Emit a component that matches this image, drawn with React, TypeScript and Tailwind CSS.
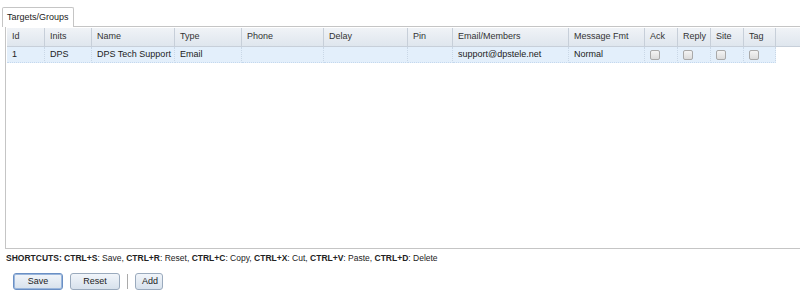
import React from 'react';

const columns = [
  { key: 'id', label: 'Id', width: 38 },
  { key: 'inits', label: 'Inits', width: 47 },
  { key: 'name', label: 'Name', width: 83 },
  { key: 'type', label: 'Type', width: 67 },
  { key: 'phone', label: 'Phone', width: 82 },
  { key: 'delay', label: 'Delay', width: 84 },
  { key: 'pin', label: 'Pin', width: 45 },
  { key: 'email', label: 'Email/Members', width: 116 },
  { key: 'fmt', label: 'Message Fmt', width: 76 },
  { key: 'ack', label: 'Ack', width: 33 },
  { key: 'reply', label: 'Reply', width: 33 },
  { key: 'site', label: 'Site', width: 33 },
  { key: 'tag', label: 'Tag', width: 32 },
];

const rows = [
  {
    id: '1',
    inits: 'DPS',
    name: 'DPS Tech Support',
    type: 'Email',
    phone: '',
    delay: '',
    pin: '',
    email: 'support@dpstele.net',
    fmt: 'Normal',
  },
];

const checkKeys = ['ack', 'reply', 'site', 'tag'];

const Checkbox = () => (
  <span className="inline-block h-[10px] w-[10px] rounded-[2px] border border-[#a9a9a9] bg-gradient-to-b from-[#f4f4f4] to-[#dcdcdc]" />
);

const Button = ({ label, focused }: { label: string; focused?: boolean }) => (
  <button
    type="button"
    className={`h-[17px] w-full rounded-[3px] border bg-gradient-to-b from-[#f1f5fa] to-[#d7e1ec] px-[6px] text-[9px] leading-none text-[#222] ${
      focused ? 'border-[#6a8fc4] shadow-[inset_0_0_0_1px_#9ab6dc]' : 'border-[#9aaabd]'
    }`}
  >
    {label}
  </button>
);

export default function App() {
  return (
    <div
      className="h-[291px] w-[800px] overflow-hidden bg-white text-[9px] text-[#222]"
      style={{ fontFamily: '"Liberation Sans", Arial, sans-serif' }}
    >
      {/* Tabs */}
      <div className="flex items-end pl-[2px] pt-[7px]">
        <div className="relative z-10 -mb-px flex h-[20px] items-center rounded-t-[2px] border border-b-0 border-[#c5c5c5] bg-white px-[4px] pt-[1px]">
          Targets/Groups
        </div>
      </div>

      {/* Panel */}
      <div className="ml-[5px] flex h-[223px] flex-col border-l border-t border-b border-[#c5c5c5] pl-px pt-px">
        <div className="flex">
          {columns.map((c) => (
            <div
              key={c.key}
              style={{ width: c.width }}
              className="flex h-[19px] shrink-0 items-center whitespace-nowrap border-r border-b border-[#c7cfd9] bg-gradient-to-b from-[#f0f3f7] to-[#dfe6ee] pl-[5px] text-[#333]"
            >
              {c.label}
            </div>
          ))}
          <div className="h-[19px] flex-1 border-b border-[#c7cfd9] bg-gradient-to-b from-[#f0f3f7] to-[#dfe6ee]" />
        </div>

        {rows.map((r) => (
          <div key={r.id} className="flex">
            {columns.map((c) => (
              <div
                key={c.key}
                style={{ width: c.width }}
                className="flex h-[16px] shrink-0 items-center whitespace-nowrap border-r border-b border-dotted border-r-[#c9d7e6] border-b-[#c4d8ee] bg-[#e3effb] pl-[5px]"
              >
                {checkKeys.includes(c.key) ? (
                  <Checkbox />
                ) : (
                  (r as Record<string, string>)[c.key]
                )}
              </div>
            ))}
          </div>
        ))}
      </div>

      {/* Footer */}
      <div className="pl-[6px] pt-[3px]">
        <p className="whitespace-nowrap text-[8.5px]">
          <b>SHORTCUTS: CTRL+S</b>: Save, <b>CTRL+R</b>: Reset, <b>CTRL+C</b>: Copy,{' '}
          <b>CTRL+X</b>: Cut, <b>CTRL+V</b>: Paste, <b>CTRL+D</b>: Delete
        </p>
        <div className="mt-[8px] flex items-center pl-[7px]">
          <div className="w-[50px]">
            <Button label="Save" focused />
          </div>
          <div className="ml-[7px] w-[50px]">
            <Button label="Reset" />
          </div>
          <div className="mx-[7px] h-[15px] w-px bg-[#aaa]" />
          <div className="w-[28px]">
            <Button label="Add" />
          </div>
        </div>
      </div>
    </div>
  );
}
